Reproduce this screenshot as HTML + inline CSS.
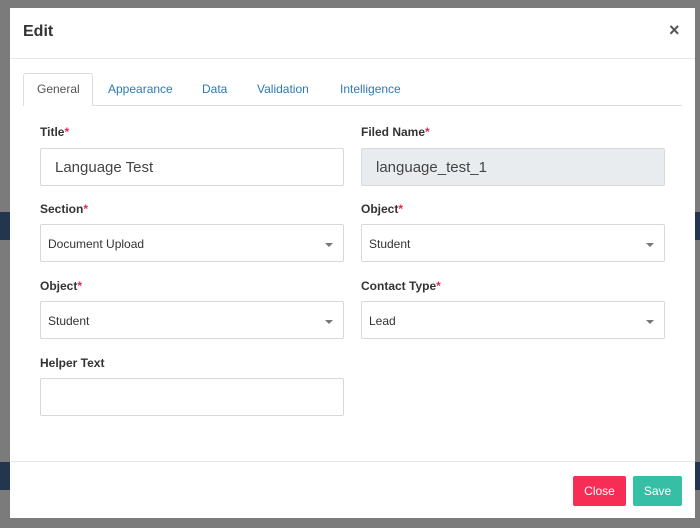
<!DOCTYPE html><html><head><style>
body{margin:0;width:700px;height:528px;background:#7b7b7b;position:relative;overflow:hidden;font-family:"Liberation Sans",sans-serif}
.bar{position:absolute;background:#22364e}
.m{position:absolute;left:10px;top:8px;width:685px;height:510px;background:#fff}
.a{position:absolute}
.lbl{position:absolute;font-size:12px;font-weight:bold;color:#333}
.lbl i{color:#e8294f;font-style:normal}
.in{position:absolute;box-sizing:border-box;border:1px solid #d8d8d8;border-radius:2px;height:38px;width:304px;background:#fff;color:#333}
.sel{font-size:12px;padding:12px 0 0 7px}
.sel:after{content:"";position:absolute;right:10px;top:18px;border-left:4px solid transparent;border-right:4px solid transparent;border-top:4px solid #777}
.tab{position:absolute;top:82px;font-size:12px;color:#2a7ab8}
</style></head><body>
<div class="bar" style="left:0;top:212px;width:10px;height:28px"></div>
<div class="bar" style="left:0;top:462px;width:10px;height:28px"></div>
<div class="bar" style="left:695px;top:212px;width:5px;height:28px"></div>
<div class="bar" style="left:695px;top:462px;width:5px;height:28px"></div>
<div class="m"></div>
<div class="a" style="left:23px;top:23px;font-size:16px;font-weight:bold;color:#333">Edit</div>
<div class="a" style="left:669px;top:20px;font-size:18px;font-weight:bold;color:#555">×</div>
<div class="a" style="left:10px;top:58px;width:685px;height:1px;background:#e8e8e8"></div>
<div class="a" style="left:23px;top:105px;width:659px;height:1px;background:#ddd"></div>
<div class="a" style="left:23px;top:73px;width:70px;height:33px;box-sizing:border-box;border:1px solid #ddd;border-bottom:none;background:#fff;border-radius:3px 3px 0 0"></div>
<div class="tab" style="left:37px;color:#555">General</div>
<div class="tab" style="left:108px">Appearance</div>
<div class="tab" style="left:202px">Data</div>
<div class="tab" style="left:257px">Validation</div>
<div class="tab" style="left:340px">Intelligence</div>
<div class="lbl" style="left:40px;top:125px">Title<i>*</i></div>
<div class="lbl" style="left:361px;top:125px">Filed Name<i>*</i></div>
<div class="in" style="left:40px;top:148px;font-size:15px;padding:10px 0 0 14px;color:#444">Language Test</div>
<div class="in" style="left:361px;top:148px;font-size:15px;padding:10px 0 0 14px;color:#444;background:#e9ecef">language_test_1</div>
<div class="lbl" style="left:40px;top:202px">Section<i>*</i></div>
<div class="lbl" style="left:361px;top:202px">Object<i>*</i></div>
<div class="in sel" style="left:40px;top:224px">Document Upload</div>
<div class="in sel" style="left:361px;top:224px">Student</div>
<div class="lbl" style="left:40px;top:279px">Object<i>*</i></div>
<div class="lbl" style="left:361px;top:279px">Contact Type<i>*</i></div>
<div class="in sel" style="left:40px;top:301px">Student</div>
<div class="in sel" style="left:361px;top:301px">Lead</div>
<div class="lbl" style="left:40px;top:356px">Helper Text</div>
<div class="in" style="left:40px;top:378px"></div>
<div class="a" style="left:10px;top:461px;width:685px;height:1px;background:#e8e8e8"></div>
<div class="a" style="left:573px;top:476px;width:53px;height:30px;background:#f72d55;border-radius:2px;color:#fff;font-size:12px;text-align:center;line-height:30px">Close</div>
<div class="a" style="left:633px;top:476px;width:49px;height:30px;background:#36bfa4;border-radius:2px;color:#fff;font-size:12px;text-align:center;line-height:30px">Save</div>
</body></html>
